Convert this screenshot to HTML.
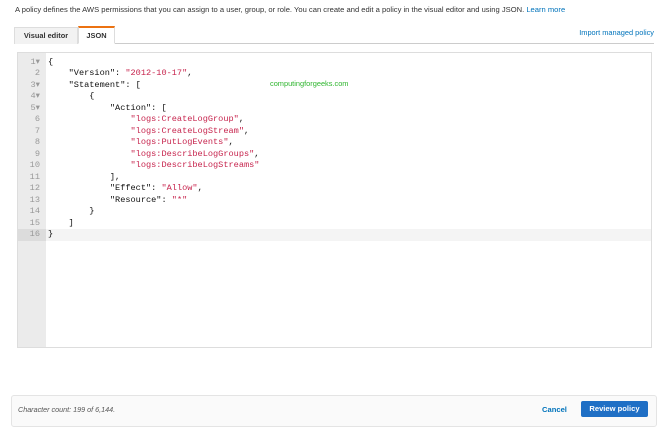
<!DOCTYPE html><html><head><style>
body{margin:0;width:664px;height:420px;background:#fff;font-family:"Liberation Sans",sans-serif;position:relative;overflow:hidden}
.p{position:absolute;left:15px;top:5px;font-size:7.6px;color:#333}
.p a{color:#0073bb}
.tabs{position:absolute;left:14px;top:26px;width:640px;height:17px;border-bottom:1px solid #ccc}
.t1{position:absolute;left:0;top:1px;width:62px;height:16px;background:#f2f2f2;border:1px solid #ddd;border-bottom:none;font-size:7.4px;font-weight:bold;color:#333;text-align:center;line-height:15px}
.t2{position:absolute;left:64px;top:0;width:37px;height:18px;background:#fff;border:1px solid #ddd;border-top:2px solid #ec7211;border-bottom:1px solid #fff;font-size:7.4px;font-weight:bold;color:#333;text-align:center;line-height:15px;box-sizing:border-box}
.imp{position:absolute;right:10px;top:28px;font-size:7.4px;color:#0073bb}
.ed{position:absolute;left:17px;top:52px;width:635px;height:296px;border:1px solid #ddd;box-sizing:border-box}
.g{position:absolute;left:0;top:0;width:28px;height:100%;background:#ebebeb}
.code{position:absolute;left:0;top:4px;font-family:"Liberation Mono",monospace;font-size:8.6px;line-height:11.47px;color:#111;white-space:pre}
.ln{display:inline-block;width:22px;text-align:right;color:#999;padding-right:8px}
.s{color:#c7254e}
.hl{position:absolute;left:0;top:176px;width:100%;height:11.5px;background:#f4f4f4}
.hlg{position:absolute;left:0;top:176px;width:28px;height:11.5px;background:#dcdcdc}
.cfg{position:absolute;left:270px;top:79px;font-size:7.4px;color:#2db52d}
.f{position:absolute;left:11px;top:395px;width:644px;height:30px;border:1px solid #e4e4e4;border-radius:3px;background:#fafafa}
.cc{position:absolute;left:6px;top:9px;font-size:7.2px;font-style:italic;color:#555}
.cn{position:absolute;left:530px;top:9px;font-size:7.6px;font-weight:bold;color:#0073bb}
.rv{position:absolute;left:569px;top:5px;width:67px;height:16px;background:#1f6fc5;border-radius:2px;color:#fff;font-size:7.6px;font-weight:bold;text-align:center;line-height:16px}
</style></head><body>
<div class="p">A policy defines the AWS permissions that you can assign to a user, group, or role. You can create and edit a policy in the visual editor and using JSON. <a>Learn more</a></div>
<div class="tabs"><div class="t1">Visual editor</div><div class="t2">JSON</div></div>
<div class="imp">Import managed policy</div>
<div class="ed"><div class="g"></div><div class="hl"></div><div class="hlg"></div>
<div class="code"><span class="ln">1▾</span>{
<span class="ln">2</span>    "Version": <span class="s">"2012-10-17"</span>,
<span class="ln">3▾</span>    "Statement": [
<span class="ln">4▾</span>        {
<span class="ln">5▾</span>            "Action": [
<span class="ln">6</span>                <span class="s">"logs:CreateLogGroup"</span>,
<span class="ln">7</span>                <span class="s">"logs:CreateLogStream"</span>,
<span class="ln">8</span>                <span class="s">"logs:PutLogEvents"</span>,
<span class="ln">9</span>                <span class="s">"logs:DescribeLogGroups"</span>,
<span class="ln">10</span>                <span class="s">"logs:DescribeLogStreams"</span>
<span class="ln">11</span>            ],
<span class="ln">12</span>            "Effect": <span class="s">"Allow"</span>,
<span class="ln">13</span>            "Resource": <span class="s">"*"</span>
<span class="ln">14</span>        }
<span class="ln">15</span>    ]
<span class="ln">16</span>}</div></div>
<div class="cfg">computingforgeeks.com</div>
<div class="f"><div class="cc">Character count: 199 of 6,144.</div><div class="cn">Cancel</div><div class="rv">Review policy</div></div>
</body></html>
